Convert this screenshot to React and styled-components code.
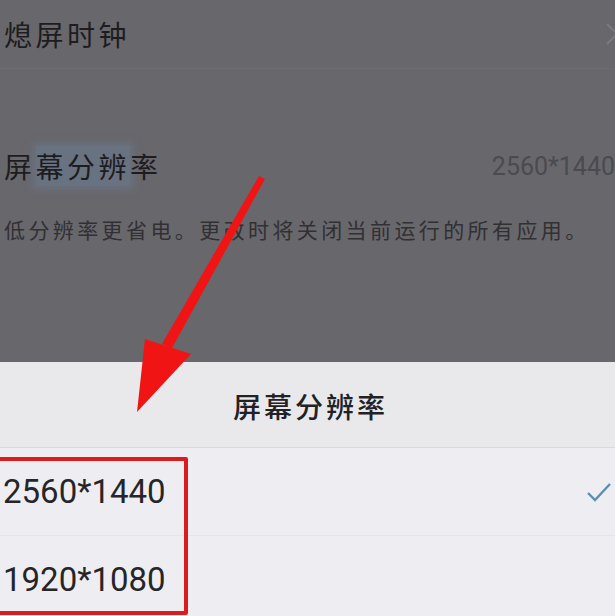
import React from 'react';
import styled, { createGlobalStyle } from 'styled-components';

const GlobalStyle = createGlobalStyle`
    html, body {
        margin: 0;
        padding: 0;
        background: #68676b;
    }
    body {
        font-family: "Noto Sans CJK SC", "Noto Sans", sans-serif;
    }
`;

const Screen = styled.div`
    position: relative;
    width: 615px;
    height: 616px;
    overflow: hidden;
    display: flex;
    flex-direction: column;
    background: #68676b;
`;

const SettingRow = styled.div`
    display: flex;
    align-items: center;
    justify-content: space-between;
    flex-shrink: 0;
    height: ${(p) => p.height}px;
    margin-top: ${(p) => p.offset || 0}px;
    padding-left: 4px;
    border-bottom: ${(p) => (p.divider ? '1px solid #6f6e72' : 'none')};
`;

const RowLabel = styled.span`
    font-size: 28px;
    letter-spacing: 3.5px;
    color: #1d1c1f;
    line-height: 1;
`;

const Selected = styled.span`
    background: rgba(110, 135, 170, 0.35);
    box-shadow: 0 0 8px 4px rgba(110, 135, 170, 0.3);
`;

const RowValue = styled.span`
    font-family: "Roboto", "Liberation Sans", sans-serif;
    font-size: 25px;
    color: #4b4a4e;
    margin-right: 0;
`;

const Chevron = styled.svg`
    width: 14px;
    height: 24px;
    margin-right: -4px;
`;

const Description = styled.p`
    margin: 26px 0 0;
    padding-left: 4px;
    font-size: 21px;
    line-height: 24px;
    letter-spacing: 3.4px;
    color: #313033;
    white-space: nowrap;
`;

const Sheet = styled.div`
    margin-top: auto;
    height: 254px;
    flex-shrink: 0;
    display: flex;
    flex-direction: column;
    overflow: hidden;
    background: #eeeef2;
`;

const SheetTitle = styled.div`
    flex: 0 0 86px;
    display: flex;
    align-items: center;
    justify-content: center;
    font-size: 28px;
    font-weight: 500;
    letter-spacing: 3px;
    color: #222125;
    background: #e9e9ec;
    border-bottom: 1px solid #d9d9dd;
    padding: 2px 0 0 6px;
    box-sizing: border-box;
`;

const Option = styled.div`
    flex: 0 0 87px;
    display: flex;
    align-items: center;
    justify-content: space-between;
    padding-left: 3px;
    border-bottom: ${(p) => (p.last ? 'none' : '1px solid #e5e5e9')};
`;

const OptionText = styled.span`
    font-family: "Roboto", "Liberation Sans", sans-serif;
    font-size: 33px;
    color: #262528;
`;

const Check = styled.svg`
    width: 26px;
    height: 22px;
    margin-right: 3px;
`;

const Highlight = styled.div`
    position: absolute;
    left: -4px;
    top: 457px;
    width: 184px;
    height: 150px;
    border: 4px solid #dc1b1d;
    border-radius: 2px;
    pointer-events: none;
`;

const ArrowLayer = styled.svg`
    position: absolute;
    left: 0;
    top: 0;
    width: 615px;
    height: 616px;
    pointer-events: none;
`;

const App = () => {
    return (
        <>
            <GlobalStyle />
            <Screen>
                <SettingRow height={68} divider>
                    <RowLabel>熄屏时钟</RowLabel>
                    <Chevron viewBox="0 0 14 24">
                        <polyline points="2,2 12,12 2,22" fill="none" stroke="#7b7a7e" strokeWidth="2" />
                    </Chevron>
                </SettingRow>
                <SettingRow height={50} offset={72}>
                    <RowLabel>
                        屏<Selected>幕分辨</Selected>率
                    </RowLabel>
                    <RowValue>2560*1440</RowValue>
                </SettingRow>
                <Description>低分辨率更省电。更改时将关闭当前运行的所有应用。</Description>

                <Sheet>
                    <SheetTitle>屏幕分辨率</SheetTitle>
                    <Option>
                        <OptionText>2560*1440</OptionText>
                        <Check viewBox="0 0 26 22">
                            <polyline points="2,12 9,19 24,3" fill="none" stroke="#5b8fb0" strokeWidth="2.4" />
                        </Check>
                    </Option>
                    <Option last>
                        <OptionText>1920*1080</OptionText>
                    </Option>
                </Sheet>

                <Highlight />
                <ArrowLayer viewBox="0 0 615 616">
                    <polygon points="259,176 265,179 172,348 162,344" fill="#f01414" />
                    <polygon points="145,339 191,354 137,412" fill="#f01414" />
                </ArrowLayer>
            </Screen>
        </>
    );
};

export default App;
